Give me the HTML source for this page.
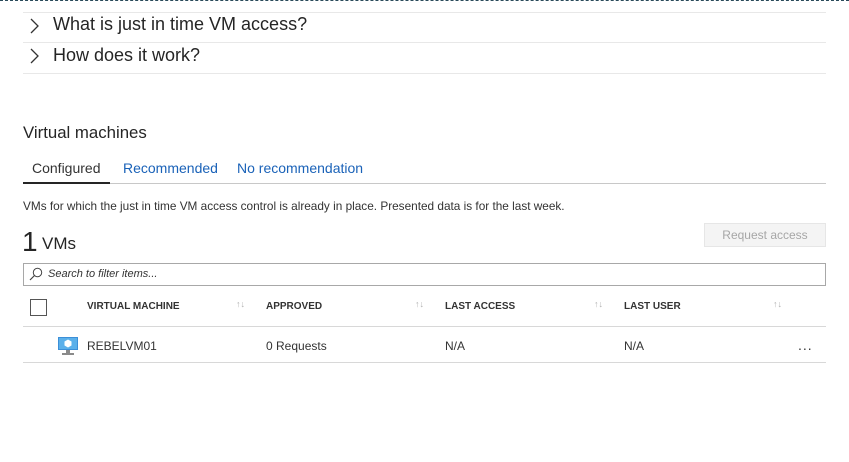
<!DOCTYPE html>
<html><head><meta charset="utf-8"><style>
*{margin:0;padding:0;box-sizing:border-box}
body{width:849px;height:462px;background:#fff;font-family:"Segoe UI","Liberation Sans",sans-serif;color:#252525;position:relative;overflow:hidden}
.a{position:absolute;white-space:nowrap}
.hl{position:absolute;left:23px;width:803px;height:1px;background:#e8e8e8}
.th{font-size:10px;font-weight:bold;color:#333;top:301px}
.so{font-size:9px;color:#b0b0b0;top:299px}
.td{font-size:12px;color:#333;top:339px}
</style></head><body>
<div class="a" style="left:0;top:0;width:849px;height:2px;border-top:1px dashed #2a4a5a"></div>
<div class="hl" style="top:12px"></div>
<div class="hl" style="top:42px"></div>
<div class="hl" style="top:73px"></div>
<svg class="a" style="left:29px;top:18px" width="12" height="16"><path d="M2 1 L9 8 L2 15" fill="none" stroke="#333" stroke-width="1.3"/></svg>
<div class="a" style="left:53px;top:14px;font-size:18px;color:#252525">What is just in time VM access?</div>
<svg class="a" style="left:29px;top:48px" width="12" height="16"><path d="M2 1 L9 8 L2 15" fill="none" stroke="#333" stroke-width="1.3"/></svg>
<div class="a" style="left:53px;top:45px;font-size:18px">How does it work?</div>
<div class="a" style="left:23px;top:123px;font-size:16.8px">Virtual machines</div>
<div class="a" style="left:32px;top:160px;font-size:14px;color:#333">Configured</div>
<div class="a" style="left:123px;top:160px;font-size:14px;color:#1a62b8">Recommended</div>
<div class="a" style="left:237px;top:160px;font-size:14px;color:#1a62b8">No recommendation</div>
<div class="a" style="left:23px;top:183px;width:803px;height:1px;background:#c8c8c8"></div>
<div class="a" style="left:23px;top:182px;width:87px;height:2px;background:#252525"></div>
<div class="a" style="left:23px;top:199px;font-size:11.8px;color:#333">VMs for which the just in time VM access control is already in place. Presented data is for the last week.</div>
<div class="a" style="left:22px;top:225px;font-size:28px;line-height:34px;color:#252525">1</div>
<div class="a" style="left:42px;top:234px;font-size:17px;color:#252525">VMs</div>
<div class="a" style="left:704px;top:223px;width:122px;height:24px;background:#f4f4f4;border:1px solid #e6e6e6;color:#a6a6a6;font-size:12px;text-align:center;line-height:22px">Request access</div>
<div class="a" style="left:23px;top:263px;width:803px;height:23px;border:1px solid #a8a8a8"></div>
<svg class="a" style="left:29px;top:267px" width="14" height="14"><circle cx="8.5" cy="5.5" r="4.2" fill="none" stroke="#444" stroke-width="1"/><path d="M5.5 8.5 L1 13" stroke="#444" stroke-width="1.2"/></svg>
<div class="a" style="left:48px;top:268px;font-size:11px;font-style:italic;color:#333">Search to filter items...</div>
<div class="a" style="left:30px;top:299px;width:17px;height:17px;border:1px solid #555"></div>
<div class="a th" style="left:87px">VIRTUAL MACHINE</div><div class="a so" style="left:236px">↑↓</div>
<div class="a th" style="left:266px">APPROVED</div><div class="a so" style="left:415px">↑↓</div>
<div class="a th" style="left:445px">LAST ACCESS</div><div class="a so" style="left:594px">↑↓</div>
<div class="a th" style="left:624px">LAST USER</div><div class="a so" style="left:773px">↑↓</div>
<div class="a" style="left:23px;top:326px;width:803px;height:1px;background:#d8d8d8"></div>
<svg class="a" style="left:57px;top:336px" width="22" height="20"><rect x="1" y="1" width="20" height="13" fill="#3c8fd8"/><rect x="2" y="2" width="18" height="11" fill="#5bb0ea"/><path d="M11 3.5 L14.5 5.5 L14.5 9.5 L11 11.5 L7.5 9.5 L7.5 5.5Z" fill="#fff"/><rect x="9" y="14" width="4" height="3" fill="#8a8a8a"/><rect x="5" y="17" width="12" height="2" fill="#8a8a8a"/></svg>
<div class="a td" style="left:87px">REBELVM01</div>
<div class="a td" style="left:266px">0 Requests</div>
<div class="a td" style="left:445px">N/A</div>
<div class="a td" style="left:624px">N/A</div>
<div class="a" style="left:798px;top:337px;font-size:14px;color:#333;letter-spacing:1px">...</div>
<div class="a" style="left:23px;top:362px;width:803px;height:1px;background:#d8d8d8"></div>
</body></html>
